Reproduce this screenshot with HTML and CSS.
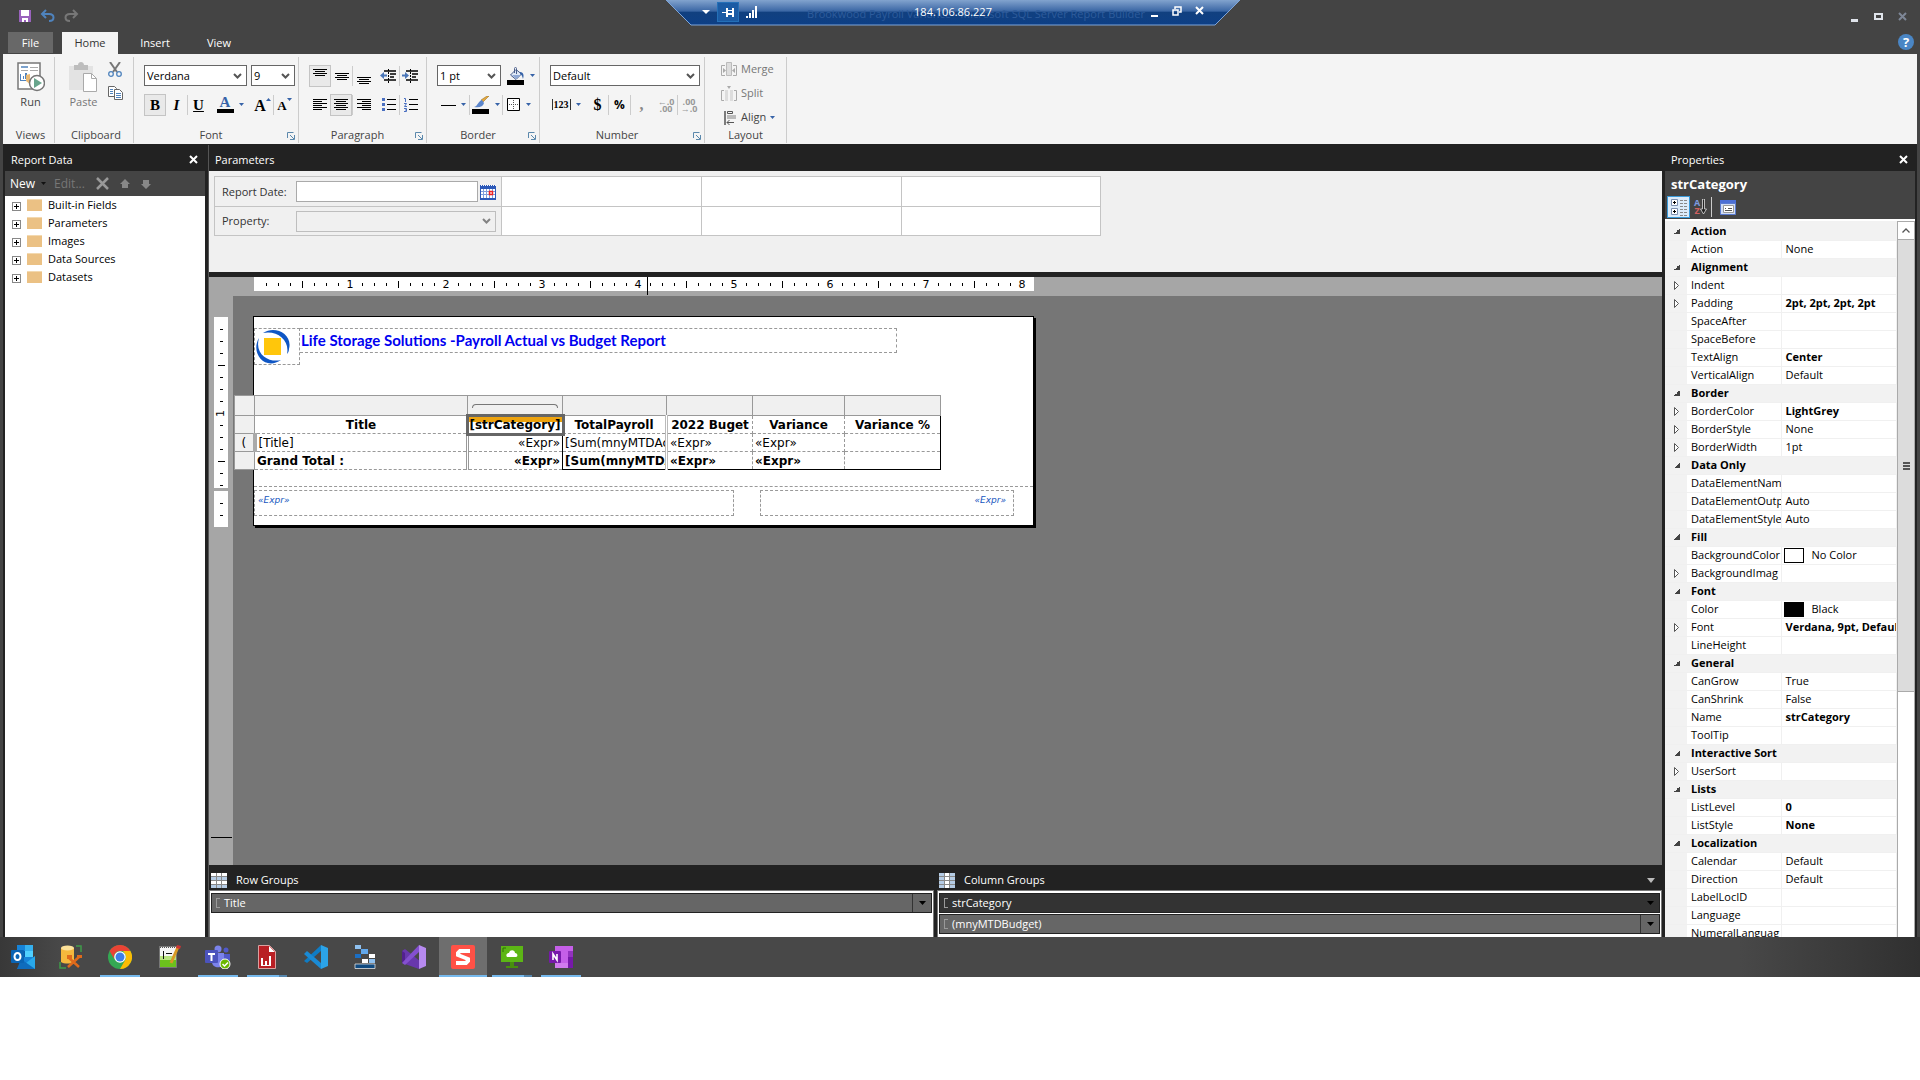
FILE: index.html
```html
<!DOCTYPE html>
<html lang="en">
<head>
  <meta charset="UTF-8">
  <title>Report Builder</title>
  <link rel="stylesheet" href="styles.css">
</head>
<body>
  <div class="window">

    <header class="titlebar">
      <div class="quick">
        <button aria-label="Save"><svg width="12" height="12" viewBox="0 0 12 12"><path fill="#9a63bd" d="M0 0h12v12H0z"/><path fill="#fff" d="M2 0h8v6H2zM3 8h6v4H7v-2H5v2H3z"/></svg></button>
        <button aria-label="Undo"><svg width="15" height="14" viewBox="0 0 15 14"><path fill="none" stroke="#4f83bd" stroke-width="2" d="M6 1L2 5l4 4M2 5h7c6 0 6 7 0 7"/></svg></button>
        <button aria-label="Redo"><svg width="15" height="14" viewBox="0 0 15 14"><path fill="none" stroke="#777" stroke-width="2" d="M9 1l4 4-4 4M13 5H6c-6 0-6 7 0 7"/></svg></button>
      </div>
      <nav class="tabs">
        <button class="tab file">File</button>
        <button class="tab active">Home</button>
        <button class="tab">Insert</button>
        <button class="tab">View</button>
      </nav>
      <div class="win-buttons">
        <button aria-label="Minimize"><svg width="9" height="12"><path fill="#dfe3ea" d="M1 9h7v3H1z"/></svg></button>
        <button aria-label="Maximize"><svg width="9" height="12"><path fill="none" stroke="#dfe3ea" stroke-width="2" d="M1 4h7v5H1z"/></svg></button>
        <button aria-label="Close"><svg width="9" height="12"><path stroke="#7e8797" stroke-width="2" d="M1 3l7 7M8 3l-7 7"/></svg></button>
      </div>
      <button class="help" aria-label="Help">?</button>

      <!-- remote desktop connection bar -->
      <div class="rdp">
        <svg class="rdp-shape" viewBox="0 0 574 26" preserveAspectRatio="none">
          <defs><linearGradient id="rdp" x2="0" y2="1"><stop offset="0" stop-color="#82a3ce"/><stop offset=".45" stop-color="#3a66a4"/><stop offset=".48" stop-color="#11407f"/><stop offset="1" stop-color="#0d3f86"/></linearGradient></defs>
          <path fill="url(#rdp)" stroke="#7da4d8" d="M0 0l25 25h524l25-25"/>
        </svg>
        <span class="ghost">Brookwood Payroll Variance - Microsoft SQL Server Report Builder</span>
        <div class="rdp-row">
          <div class="rdp-left">
            <svg width="8" height="5"><path fill="#fff" d="M0 0h8L4 4z"/></svg>
            <span class="pin"><svg width="12" height="9"><path fill="#fff" d="M0 4h5v1H0zM4 0h2v9H4zM6 2h4v1H6zM6 5h4v2H6zM10 0h2v9h-2z"/></svg></span>
            <svg width="12" height="12"><path fill="#fff" d="M0 10h2v2H0zM3 7h2v5H3zM6 4h2v8H6zM9 0h2v12H9z"/></svg>
          </div>
          <span>184.106.86.227</span>
          <div class="rdp-right">
            <svg width="9" height="12"><path fill="#fff" d="M1 9h7v2H1z"/></svg>
            <svg width="10" height="10"><path fill="none" stroke="#fff" stroke-width="1.5" d="M1 4h5v5H1zM3 3V1h6v5H7"/></svg>
            <svg width="10" height="10"><path stroke="#fff" stroke-width="2" d="M1 1l7 7M8 1L1 8"/></svg>
          </div>
        </div>
      </div>
    </header>

    <section class="ribbon">
      <div class="group g-views">
        <div class="group-body">
          <button class="big"><svg width="28" height="30" viewBox="0 0 28 30"><path fill="#fff" stroke="#777" stroke-width="1.5" d="M1 1h22v26H1z"/><path stroke="#4f83bd" stroke-width="1.5" d="M4 5h7"/><path stroke="#aaa" d="M4 8.500h7M13 5.500h8M13 8.500h8"/><path fill="#4f83bd" d="M3 12h1v6h6v1H3zM6 14h1v3H6zM8 11h2v6H8z"/><path fill="#e9b872" d="M9 13l4-1v10l-4-3z"/><circle cx="20" cy="21" r="7.500" fill="#fff" stroke="#777" stroke-width="1.500"/><path fill="#68a58c" d="M17 16l8 5-8 5z"/></svg>Run</button>
        </div>
        <div class="group-label">Views</div>
      </div>

      <div class="group g-clip">
        <div class="group-body">
          <button class="big dim"><svg width="28" height="30" viewBox="0 0 28 30"><path fill="#e3e3e3" d="M0 4h24v24H0z"/><path fill="#bdbdbd" d="M5 3h4c0-4 6-4 6 0h4v5H5z"/><path fill="#fff" stroke="#aaa" d="M14.500 11.500h8l5 5v13h-13z"/><path fill="none" stroke="#aaa" d="M22.500 11.500v5h5"/></svg>Paste</button>
          <div class="stack">
            <button aria-label="Cut"><svg width="14" height="15" viewBox="0 0 14 15"><path stroke="#777" stroke-width="2" d="M2 0l7 10M12 0L5 10"/><circle cx="3" cy="12" r="2.300" fill="none" stroke="#4f83bd" stroke-width="1.300"/><circle cx="11" cy="12" r="2.300" fill="none" stroke="#4f83bd" stroke-width="1.300"/></svg></button>
            <button aria-label="Copy"><svg width="15" height="14" viewBox="0 0 15 14"><path fill="#fff" stroke="#666" d="M.5.500h6l2 2v8h-8z"/><path fill="#fff" stroke="#666" d="M6.500 3.500h5l3 3v7h-8z"/><path stroke="#4f83bd" d="M2 3.500h3M2 5.500h3M2 7.500h3M8 7.500h5M8 9.500h5M8 11.500h5"/></svg></button>
          </div>
        </div>
        <div class="group-label">Clipboard</div>
      </div>

      <div class="group g-font">
        <div class="rows">
          <div class="row">
            <select class="w-name" aria-label="Font"><option>Verdana</option></select>
            <select class="w-size" aria-label="Font size"><option>9</option></select>
          </div>
          <div class="row">
            <button class="tool on serif"><b>B</b></button>
            <button class="tool serif"><b><i>I</i></b></button>
            <i class="sep"></i>
            <button class="tool serif"><b><u>U</u></b></button>
            <button class="tool drop font-color"><span class="swatch-letter">A</span><svg class="arrow" width="5" height="3"><path d="M0 0h5L2.500 3z"/></svg></button>
            <button class="tool grow">A<svg width="5" height="3"><path fill="#3763a8" d="M0 3h5L2.500 0z"/></svg></button>
            <i class="sep"></i>
            <button class="tool shrink">A<svg width="5" height="3"><path fill="#3763a8" d="M0 0h5L2.500 3z"/></svg></button>
          </div>
        </div>
        <div class="group-label has-launch">Font<svg class="launch" width="8" height="8"><path fill="none" stroke="#5b88ac" d="M.5 6V.5h6M3 3l4 4M7.500 3v4.500H3"/></svg></div>
      </div>

      <div class="group g-para">
        <div class="rows">
          <div class="row">
            <button class="tool on" aria-label="Top"><svg width="14" height="16"><path stroke="#000" d="M0 1.500h14M2 3.500h10M0 5.500h14M2 7.500h10"/></svg></button>
            <button class="tool" aria-label="Middle"><svg width="14" height="16"><path stroke="#000" d="M0 5.500h14M2 7.500h10M0 9.500h14M2 11.500h10"/></svg></button>
            <i class="sep"></i>
            <button class="tool" aria-label="Bottom"><svg width="14" height="16"><path stroke="#000" d="M0 9.500h14M2 11.500h10M0 13.500h14M2 15.500h10"/></svg></button>
            <button class="tool shift" aria-label="Decrease indent"><svg width="17" height="16"><path stroke="#000" stroke-dasharray="2 1" d="M8.500 1v14"/><path stroke="#000" stroke-width="1.500" d="M4 3h12M10 6h6M10 9h4M4 12h12"/><path fill="#4a76b8" d="M0 7.500L4 4v2.500h3v2H4V11z"/></svg></button>
            <i class="sep"></i>
            <button class="tool" aria-label="Increase indent"><svg width="17" height="16"><path stroke="#000" stroke-dasharray="2 1" d="M8.500 1v14"/><path stroke="#000" stroke-width="1.500" d="M4 3h12M10 6h6M10 9h4M4 12h12"/><path fill="#4a76b8" d="M7 7.500L3 4v2.500H0v2h3V11z"/></svg></button>
          </div>
          <div class="row">
            <button class="tool" aria-label="Align left"><svg width="14" height="12"><path stroke="#000" d="M0 .5h14M0 2.500h9M0 4.500h14M0 6.500h9M0 8.500h14M0 10.500h9"/></svg></button>
            <button class="tool on" aria-label="Center"><svg width="14" height="12"><path stroke="#000" d="M0 .5h14M2 2.500h10M0 4.500h14M2 6.500h10M0 8.500h14M2 10.500h10"/></svg></button>
            <i class="sep"></i>
            <button class="tool" aria-label="Align right"><svg width="14" height="12"><path stroke="#000" d="M0 .5h14M5 2.500h9M0 4.500h14M5 6.500h9M0 8.500h14M5 10.500h9"/></svg></button>
            <button class="tool shift" aria-label="Bullets"><svg width="14" height="14"><path fill="#4a6fc0" d="M0 0h3v3H0zM0 5h3v3H0zM0 10h3v3H0z"/><path stroke="#000" d="M5 1.500h9M5 6.500h9M5 11.500h9"/></svg></button>
            <i class="sep"></i>
            <button class="tool" aria-label="Numbering"><svg width="14" height="14"><path fill="none" stroke="#4a6fc0" d="M0 .5h1.500V4M0 5.500h2.500L.5 8.500H3M0 10.500h2.500v3H0M1 12h1"/><path stroke="#000" d="M5 1.500h9M5 6.500h9M5 11.500h9"/></svg></button>
          </div>
        </div>
        <div class="group-label has-launch">Paragraph<svg class="launch" width="8" height="8"><path fill="none" stroke="#5b88ac" d="M.5 6V.5h6M3 3l4 4M7.500 3v4.500H3"/></svg></div>
      </div>

      <div class="group g-border">
        <div class="rows">
          <div class="row">
            <select class="w-pt" aria-label="Border width"><option>1 pt</option></select>
            <button class="tool drop" aria-label="Fill color"><svg width="18" height="18"><path fill="#000" d="M0 13h17v5H0z"/><path fill="#dfe8f6" stroke="#4a5f8c" d="M3.500 8L9 2.500 14.500 7 9 12.500z"/><path fill="#8fa9d6" d="M5 8h9l-5 4z"/><path fill="none" stroke="#4a5f8c" d="M7.500 6V1.500c0-1.500 2-1.500 2 0V7"/><path fill="#3763a8" d="M13 5c4 0 4 4 3 7-1-3-1-4-3-5z"/></svg><svg class="arrow" width="5" height="3"><path d="M0 0h5L2.500 3z"/></svg></button>
          </div>
          <div class="row">
            <button class="tool drop" aria-label="Line style"><svg width="15" height="12"><path stroke="#000" d="M0 6.500h15"/></svg><svg class="arrow" width="5" height="3"><path d="M0 0h5L2.500 3z"/></svg></button>
            <i class="sep"></i>
            <button class="tool drop" aria-label="Border color"><svg width="18" height="18"><path fill="#000" d="M0 13h17v5H0z"/><path fill="#e6a93b" stroke="#8a6420" stroke-width=".5" d="M17 0l-6 6-2-2 6-4z"/><path fill="#5c86cc" d="M10 4l2 3c-1 4-5 5-10 4 4-1 4-6 8-7z"/></svg><svg class="arrow" width="5" height="3"><path d="M0 0h5L2.500 3z"/></svg></button>
            <i class="sep"></i>
            <button class="tool drop" aria-label="Borders"><svg width="14" height="14"><path fill="#fff" stroke="#000" d="M.5.500h12v12H.5z"/><path stroke="#555" stroke-dasharray="1 1" d="M6.500 2v10M2 6.500h10"/></svg><svg class="arrow" width="5" height="3"><path d="M0 0h5L2.500 3z"/></svg></button>
          </div>
        </div>
        <div class="group-label has-launch">Border<svg class="launch" width="8" height="8"><path fill="none" stroke="#5b88ac" d="M.5 6V.5h6M3 3l4 4M7.500 3v4.500H3"/></svg></div>
      </div>

      <div class="group g-num">
        <div class="rows">
          <div class="row">
            <select class="w-fmt" aria-label="Number format"><option>Default</option></select>
          </div>
          <div class="row">
            <button class="tool drop digits"><span>123</span><svg class="arrow" width="5" height="3"><path d="M0 0h5L2.500 3z"/></svg></button>
            <button class="tool money">$</button>
            <i class="sep"></i>
            <button class="tool pct">%</button>
            <i class="sep"></i>
            <button class="tool comma">,</button>
            <button class="tool dec"><span>&larr;.0</span><span>.00</span></button>
            <i class="sep"></i>
            <button class="tool dec"><span>.00</span><span>&rarr;.0</span></button>
          </div>
        </div>
        <div class="group-label has-launch">Number<svg class="launch" width="8" height="8"><path fill="none" stroke="#5b88ac" d="M.5 6V.5h6M3 3l4 4M7.500 3v4.500H3"/></svg></div>
      </div>

      <div class="group g-layout">
        <div class="rows">
          <button class="line dim"><svg width="16" height="15"><path fill="none" stroke="#aaa" d="M4 3.500H.5v10H4M12 3.500h3.500v10H12"/><path fill="#ddd" stroke="#bbb" d="M5.500.500h5v13h-5z"/><path fill="#aaa" d="M2 6l3 2.500L2 11zM14 6l-3 2.500 3 2.500z"/></svg>Merge</button>
          <button class="line dim"><svg width="16" height="15"><path fill="none" stroke="#aaa" d="M3 4.500H.5v10H3M13 4.500h2.500v10H13"/><path fill="#ddd" d="M4 4h3v11H4zM9 4h3v11H9z"/><path fill="#aaa" d="M6 0h4L8 3z"/></svg>Split</button>
          <button class="line"><svg width="16" height="15"><path stroke="#555" stroke-width="1.500" d="M4 1v14"/><path fill="none" stroke="#555" d="M6.500 1.500h5v2h-5z"/><path fill="#bbb" d="M6 5h9v4H6z"/><path fill="none" stroke="#555" d="M13 12.500H6M8.500 10L6 12.500 8.500 15"/></svg>Align<svg class="arrow" width="5" height="3"><path d="M0 0h5L2.500 3z"/></svg></button>
        </div>
        <div class="group-label">Layout</div>
      </div>
    </section>

    <main class="workspace">

      <aside class="report-data">
        <div class="pane-title">Report Data<button aria-label="Close"><svg width="9" height="9"><path stroke="#fff" stroke-width="2" d="M1 1l7 7M8 1L1 8"/></svg></button></div>
        <div class="data-tools">
          <button>New</button><svg width="5" height="3"><path fill="#111" d="M0 0h5L2.500 3z"/></svg>
          <button class="off">Edit...</button>
          <button aria-label="Delete"><svg width="13" height="13"><path stroke="#999" stroke-width="2.500" d="M1 1l11 11M12 1L1 12"/></svg></button>
          <button aria-label="Move up"><svg width="10" height="10"><path fill="#888" d="M5 0l5 5H8v4H2V5H0z"/></svg></button>
          <button aria-label="Move down"><svg width="10" height="10"><path fill="#888" d="M5 10L0 5h2V1h6v4h2z"/></svg></button>
        </div>
        <ul class="tree">
          <li><span class="plus"></span><span class="folder"></span>Built-in Fields</li>
          <li><span class="plus"></span><span class="folder"></span>Parameters</li>
          <li><span class="plus"></span><span class="folder"></span>Images</li>
          <li><span class="plus"></span><span class="folder"></span>Data Sources</li>
          <li><span class="plus"></span><span class="folder"></span>Datasets</li>
        </ul>
      </aside>

      <section class="center">
        <div class="pane-title">Parameters</div>
        <div class="params">
          <div class="param-grid">
            <div class="param">
              <label for="report-date">Report Date:</label>
              <input type="text" id="report-date">
              <svg width="16" height="16"><path fill="#2b58b8" d="M0 1h16v15H0z"/><path fill="#fff" d="M1 5h14v9H1z"/><path stroke="#7f9fdc" d="M3.500 5v9M6.500 5v9M9.500 5v9M12.500 5v9M1 7.500h14M1 10.500h14"/><path fill="none" stroke="#fff" stroke-dasharray="1 1" d="M1 1.500h15"/><path fill="#fff" stroke="#e22" stroke-width="1.500" d="M9.500 7.500h3v3h-3z"/></svg>
            </div>
            <div></div><div></div><div></div>
            <div class="param">
              <label for="property">Property:</label>
              <select id="property" disabled></select>
            </div>
            <div></div><div></div><div></div>
          </div>
        </div>

        <div class="design">
          <div class="ruler-x">
            <div class="ticks-x"><span>1</span><span>2</span><span>3</span><span>4</span><span>5</span><span>6</span><span>7</span><span>8</span></div>
            <i class="cursor-x"></i>
          </div>
          <div class="ruler-y">
            <div class="ticks-y"><span>1</span></div>
            <div class="ticks-y footer-ticks"></div>
            <i class="cursor-y"></i>
          </div>
          <div class="canvas">
            <div class="page">
              <div class="page-head">
                <div class="logo"><svg width="36" height="36" viewBox="0 0 36 36"><path fill="#ffc60b" d="M9 9h17v17H9z"/><path fill="#0f56c4" d="M8 4C20-4 38 5 34 20c0 2-1 4-2 5C35 11 22 1 8 4z"/><path fill="#0f56c4" d="M4 9C-5 24 10 42 26 31 15 34-1 26 4 9z"/></svg></div>
                <div class="report-title">Life Storage Solutions -Payroll Actual vs Budget Report</div>
              </div>
              <table class="tablix">
                <colgroup><col class="c-handle"><col class="c-title"><col class="c-cat"><col class="c-total"><col class="c-budget"><col class="c-var"><col class="c-pct"></colgroup>
                <thead>
                  <tr class="handles"><td></td><td></td><td><i class="bracket"></i></td><td></td><td></td><td></td><td></td></tr>
                  <tr><td class="handle"></td><th>Title</th><th class="selected">[strCategory]</th><th class="edge-l">TotalPayroll</th><th class="split">2022 Buget</th><th>Variance</th><th class="edge-r">Variance %</th></tr>
                </thead>
                <tbody>
                  <tr><td class="handle">(</td><td class="first">[Title]</td><td class="num">«Expr»</td><td class="edge-l">[Sum(mnyMTDAc</td><td class="split">«Expr»</td><td>«Expr»</td><td class="edge-r"></td></tr>
                  <tr class="total"><td class="handle"></td><td>Grand Total :</td><td class="num">«Expr»</td><td class="edge-l">[Sum(mnyMTDA</td><td class="split">«Expr»</td><td>«Expr»</td><td class="edge-r"></td></tr>
                </tbody>
              </table>
              <div class="page-foot">
                <div class="foot-left">«Expr»</div>
                <div class="foot-right">«Expr»</div>
              </div>
            </div>
          </div>
        </div>

        <div class="groups">
          <div class="grp">
            <div class="grp-title"><svg width="16" height="15"><path fill="#fff" d="M0 0h16v15H0z"/><path fill="#b4cbe4" d="M0 4h16v4H0zM0 11h16v4H0z"/><path fill="none" stroke="#888" d="M0 3.500h16M0 7.500h16M0 11.500h16M5.500 0v15M10.500 0v15"/></svg>Row Groups</div>
            <div class="grp-list">
              <button class="grp-item"><em></em>Title<span><svg width="7" height="4"><path d="M0 0h7L3.500 4z"/></svg></span></button>
            </div>
          </div>
          <div class="grp">
            <div class="grp-title"><svg width="16" height="15"><path fill="#b4cbe4" d="M0 0h16v15H0z"/><path fill="#fff" d="M5 0h6v15H5z"/><path fill="none" stroke="#888" d="M0 3.500h16M0 7.500h16M0 11.500h16M5.500 0v15M10.500 0v15"/></svg>Column Groups<svg class="more" width="8" height="5"><path fill="#bbb" d="M0 0h8L4 5z"/></svg></div>
            <div class="grp-list">
              <button class="grp-item dark"><em></em>strCategory<span><svg width="7" height="4"><path d="M0 0h7L3.500 4z"/></svg></span></button>
              <button class="grp-item"><em></em>(mnyMTDBudget)<span><svg width="7" height="4"><path d="M0 0h7L3.500 4z"/></svg></span></button>
            </div>
          </div>
        </div>
      </section>

      <aside class="properties">
        <div class="pane-title">Properties<button aria-label="Close"><svg width="9" height="9"><path stroke="#fff" stroke-width="2" d="M1 1l7 7M8 1L1 8"/></svg></button></div>
        <div class="prop-head">
          <div class="prop-name">strCategory</div>
          <div class="prop-tools">
            <button class="on" aria-label="Categorized"><svg width="18" height="18"><path fill="#fff" stroke="#7b8fb0" d="M1.500 1.500h6v6h-6zM1.500 10.500h6v6h-6z"/><path stroke="#000" d="M3 4.500h3M4.500 3v3M3 13.500h3M4.500 12v3"/><path stroke="#888" stroke-dasharray="3 1" d="M10 2.500h7M10 5.500h7M10 8.500h7M10 11.500h7M10 14.500h7M10 17.500h7"/></svg></button>
            <button aria-label="Alphabetical" class="az"><span><b>A</b><b>Z</b></span><svg width="7" height="16"><path fill="#222" stroke="#ddd" stroke-width=".8" d="M2.500 0h2v10h2l-3 5-3-5h2z"/></svg></button>
            <i class="sep"></i>
            <button aria-label="Property pages"><svg width="16" height="15"><path fill="#4b6fd6" d="M0 0h16v4H0z"/><path fill="#cfdcf5" stroke="#5a7bd0" d="M.5 3.500h15v11H.5z"/><path fill="#fff" stroke="#999" d="M3.500 5.500h10v7h-10z"/><path stroke="#555" d="M5 8.500h1M8 8.500h4M5 10.500h7"/></svg></button>
          </div>
        </div>
        <div class="prop-body">
          <table class="props">
            <colgroup><col class="p-mark"><col class="p-key"><col></colgroup>
            <tbody>
              <tr class="cat"><td></td><th colspan="2">Action</th></tr>
              <tr><td></td><td>Action</td><td>None</td></tr>
              <tr class="cat"><td></td><th colspan="2">Alignment</th></tr>
              <tr class="sub"><td></td><td>Indent</td><td></td></tr>
              <tr class="sub"><td></td><td>Padding</td><td><b>2pt, 2pt, 2pt, 2pt</b></td></tr>
              <tr><td></td><td>SpaceAfter</td><td></td></tr>
              <tr><td></td><td>SpaceBefore</td><td></td></tr>
              <tr><td></td><td>TextAlign</td><td><b>Center</b></td></tr>
              <tr><td></td><td>VerticalAlign</td><td>Default</td></tr>
              <tr class="cat"><td></td><th colspan="2">Border</th></tr>
              <tr class="sub"><td></td><td>BorderColor</td><td><b>LightGrey</b></td></tr>
              <tr class="sub"><td></td><td>BorderStyle</td><td>None</td></tr>
              <tr class="sub"><td></td><td>BorderWidth</td><td>1pt</td></tr>
              <tr class="cat"><td></td><th colspan="2">Data Only</th></tr>
              <tr><td></td><td>DataElementNam</td><td></td></tr>
              <tr><td></td><td>DataElementOutp</td><td>Auto</td></tr>
              <tr><td></td><td>DataElementStyle</td><td>Auto</td></tr>
              <tr class="cat"><td></td><th colspan="2">Fill</th></tr>
              <tr><td></td><td>BackgroundColor</td><td class="color"><i class="chip"></i>No Color</td></tr>
              <tr class="sub"><td></td><td>BackgroundImag</td><td></td></tr>
              <tr class="cat"><td></td><th colspan="2">Font</th></tr>
              <tr><td></td><td>Color</td><td class="color"><i class="chip black"></i>Black</td></tr>
              <tr class="sub"><td></td><td>Font</td><td><b>Verdana, 9pt, Default,</b></td></tr>
              <tr><td></td><td>LineHeight</td><td></td></tr>
              <tr class="cat"><td></td><th colspan="2">General</th></tr>
              <tr><td></td><td>CanGrow</td><td>True</td></tr>
              <tr><td></td><td>CanShrink</td><td>False</td></tr>
              <tr><td></td><td>Name</td><td><b>strCategory</b></td></tr>
              <tr><td></td><td>ToolTip</td><td></td></tr>
              <tr class="cat"><td></td><th colspan="2">Interactive Sort</th></tr>
              <tr class="sub"><td></td><td>UserSort</td><td></td></tr>
              <tr class="cat"><td></td><th colspan="2">Lists</th></tr>
              <tr><td></td><td>ListLevel</td><td><b>0</b></td></tr>
              <tr><td></td><td>ListStyle</td><td><b>None</b></td></tr>
              <tr class="cat"><td></td><th colspan="2">Localization</th></tr>
              <tr><td></td><td>Calendar</td><td>Default</td></tr>
              <tr><td></td><td>Direction</td><td>Default</td></tr>
              <tr><td></td><td>LabelLocID</td><td></td></tr>
              <tr><td></td><td>Language</td><td></td></tr>
              <tr><td></td><td>NumeralLanguag</td><td></td></tr>
            </tbody>
          </table>
          <div class="scroll">
            <span class="up"><svg width="8" height="5"><path fill="none" stroke="#555" stroke-width="1.300" d="M.5 4.500L4 1l3.500 3.500"/></svg></span>
            <span class="thumb"><svg width="7" height="8"><path stroke="#555" stroke-width="2" d="M0 1h7M0 4h7M0 7h7"/></svg></span>
            <span class="down"></span>
          </div>
        </div>
      </aside>
    </main>

    <footer class="taskbar">
      <button aria-label="Outlook"><svg width="24" height="24"><path fill="#1683d8" d="M6 0h16v18H6z"/><path fill="#35b0ee" d="M14 0h8v6h-8z"/><path fill="#0a5aa8" d="M6 6h8v6H6z"/><path fill="#50d0ff" d="M14 6h8v6h-8z"/><path fill="#28a8ea" d="M6 24h18V11l-9 7z"/><path fill="#0f6cbd" d="M6 24h18L10 14z"/><rect y="5" width="13" height="13" rx="1" fill="#0a64b4"/><ellipse cx="6.500" cy="11.500" rx="3" ry="3.500" fill="none" stroke="#fff" stroke-width="2"/></svg></button>
      <button aria-label="SQL Server Management Studio"><svg width="24" height="24"><path fill="#f5b83d" d="M2 3h13v14c-3 2-10 2-13 0z"/><ellipse cx="8.500" cy="3" rx="6.500" ry="2.500" fill="#fde29a"/><path fill="none" stroke="#3f9a4a" stroke-width="1.500" d="M17 1h5v6M1 17v6h6"/><path stroke="#e06a1b" stroke-width="2.500" d="M9 12l11 10M20 12L9 22"/><path fill="#e06a1b" d="M8 10h5v4H8zM18 10h5v3h-5z"/></svg></button>
      <button class="run" aria-label="Chrome"><svg width="24" height="24" viewBox="0 0 24 24"><circle cx="12" cy="12" r="12" fill="#34a853"/><path fill="#ea4335" d="M1.600 6A12 12 0 0 1 22.400 6H12a6 6 0 0 0-5.200 9z"/><path fill="#fbbc05" d="M22.400 6A12 12 0 0 1 12 24l5.200-9A6 6 0 0 0 17 9l-2-3z"/><circle cx="12" cy="12" r="5.800" fill="#fff"/><circle cx="12" cy="12" r="4.500" fill="#3f7ee8"/></svg></button>
      <button aria-label="Notepad++"><svg width="24" height="24"><path fill="#f5f5f5" stroke="#777" d="M2.500 1.500h17v21h-17z"/><path fill="#6bc21c" d="M3 13h16v9H3z"/><path fill="#b7e37e" d="M3 11h16v4H3z"/><path stroke="#555" stroke-dasharray="1 1" d="M3 2.500h16"/><path stroke="#111" d="M6.500 6v8M9 8.500h6"/><path stroke="#d99a26" stroke-width="3" d="M21 2l-7 16"/><path fill="#c33" d="M20 0l4 1-1 3-4-1z"/></svg></button>
      <button class="run" aria-label="Teams"><svg width="26" height="24"><circle cx="13" cy="4" r="3.500" fill="#7b83eb"/><circle cx="21" cy="5" r="2.500" fill="#5059c9"/><path fill="#5059c9" d="M16 9h9v7c0 4-6 5-8 2z"/><path fill="#7b83eb" d="M7 8h12v9c0 7-12 7-12 0z"/><rect y="5" width="13" height="13" rx="1" fill="#4b53bc"/><path fill="#fff" d="M3 8h7v2H7.500v6h-2v-6H3z"/><circle cx="20" cy="19" r="5" fill="#6bb700" stroke="#fff"/><path fill="none" stroke="#fff" stroke-width="1.500" d="M17.500 19l2 2 3.500-3.500"/></svg></button>
      <button class="run multi" aria-label="Report Builder"><svg width="20" height="24"><path fill="#b81f24" stroke="#d8a0a0" d="M1.500.500h11l6 6v17h-17z"/><path fill="#fff" d="M12 1v6h6zM4 13h2v7H4zM8 16h2v4H8zM12 11h2v9h-2zM4 20h10v1H4z"/></svg></button>
      <button aria-label="Visual Studio Code"><svg width="24" height="24" viewBox="0 0 24 24"><path fill="#0f7cc4" d="M17 0v6L3 18l-3-2 15-14z"/><path fill="#1a8ad4" d="M3 6l14 12v6L0 9z"/><path fill="#2ba3e8" d="M17 0l7 3v18l-7 3z"/></svg></button>
      <button aria-label="Integration Services"><svg width="22" height="24"><path fill="#8fc1f0" d="M1 0h6v4H1z"/><path fill="#62a8ec" d="M7 4h7v5H7z"/><path fill="#1b6fc4" d="M1 9h6v4H1z"/><path fill="#fff" d="M15 9h6v4h-6zM8 14h6v4H8z"/><path fill="#8fc1f0" d="M15 14h6v4h-6z"/><path fill="#104a80" stroke="#e0e0e0" stroke-width=".8" d="M1 19h20v4.500H1z"/></svg></button>
      <button aria-label="Visual Studio"><svg width="24" height="24" viewBox="0 0 24 24"><path fill="#6b35b8" d="M0 6l3-2 16 13-2 7L3 19z" opacity=".9"/><path fill="#52218f" d="M0 6l3 2v8l-3 2z"/><path fill="#8450cf" d="M17 0v7L3 20l-3-2z"/><path fill="#b78af0" d="M17 0l7 3v18l-7 3z"/></svg></button>
      <button class="run current" aria-label="Snagit"><svg width="24" height="24"><rect width="24" height="24" rx="2" fill="#ff5146"/><path fill="none" stroke="#fff" stroke-width="4" d="M19 6H9L7 8v2l10 4v2l-2 2H5"/></svg></button>
      <button class="run multi" aria-label="Remote Desktop"><svg width="24" height="24"><path fill="#5cb615" d="M1 1h22v16H1z"/><path fill="#478f0e" d="M10 17h4v4h-4zM6 21h12v2H6z"/><path fill="#fff" d="M7 12c-2-3 1-4 2-4 1-4 6-3 6 0 3 0 3 4 1 4z"/><path fill="none" stroke="#2f6e06" d="M3 7V3h3"/></svg></button>
      <button class="run" aria-label="OneNote"><svg width="24" height="24"><path fill="#c55fe8" d="M6 1h18v22H6z"/><path fill="#9332bf" d="M19 6h5v6h-5z"/><path fill="#7719aa" d="M19 12h5v11h-5z"/><path fill="#e6a5fa" d="M6 18h13v5H6z" opacity=".4"/><rect y="6" width="12" height="12" rx="1" fill="#7719aa"/><path fill="none" stroke="#fff" stroke-width="1.600" d="M4 15V9l4 6V9"/></svg></button>
    </footer>
  </div>
</body>
</html>
```

FILE: styles.css
```css
* {
  box-sizing: border-box;
}
body {
  margin: 0;
  background: #fff;
  font-family: "Open Sans", "Noto Sans", sans-serif;
  font-size: 11px;
  line-height: 16px;
  color: #000;
}
button {
  padding: 0;
  border: none;
  background: none;
  font: inherit;
  color: inherit;
  display: flex;
  align-items: center;
  justify-content: center;
}
svg {
  display: block;
  flex: none;
}
.window {
  display: flex;
  flex-direction: column;
  height: calc(100vh - 103px);
  background: #444;
}

/* title bar */
.titlebar {
  position: relative;
  display: grid;
  grid-template-columns: 1fr auto;
  grid-template-rows: 32px 22px;
  color: #fff;
}
.quick {
  display: flex;
  align-items: center;
  gap: 9px;
  padding-left: 19px;
}
.win-buttons {
  display: flex;
  align-items: center;
  gap: 15px;
  padding-right: 13px;
}
.tabs {
  grid-row: 2;
  display: flex;
  padding-left: 8px;
}
.tab {
  width: 64px;
}
.tab.file {
  width: 45px;
  height: 21px;
  margin-right: 9px;
  background: #686868;
}
.tab.active {
  width: 56px;
  margin-right: 5px;
  background: #f4f4f4;
  color: #333;
}
.help {
  grid-row: 2;
  justify-self: end;
  width: 16px;
  height: 16px;
  margin: 2px 6px 0 0;
  border-radius: 50%;
  background: #4a86c5;
  font-weight: bold;
  font-size: 13px;
}
.rdp {
  position: absolute;
  top: 0;
  left: 50%;
  width: 574px;
  height: 26px;
  margin-left: -294px;
}
.rdp-shape {
  position: absolute;
  width: 100%;
  height: 100%;
}
.ghost {
  position: absolute;
  left: 46px;
  right: 0;
  top: 6px;
  text-align: center;
  color: #2e5c9c;
}
.rdp-row {
  position: relative;
  display: grid;
  grid-template-columns: 1fr auto 1fr;
  align-items: center;
  height: 24px;
}
.rdp-left {
  display: flex;
  align-items: center;
  gap: 7px;
  padding-left: 36px;
}
.rdp-right {
  display: flex;
  justify-content: flex-end;
  gap: 13px;
  padding-right: 35px;
}
.pin {
  display: flex;
  align-items: center;
  justify-content: center;
  width: 22px;
  height: 20px;
  border: 1px solid #2470b8;
  background: #1b5ba4;
}

/* ribbon */
.ribbon {
  display: flex;
  height: 90px;
  margin: 0 3px;
  background: #f4f4f4;
  color: #444;
}
.group {
  display: flex;
  flex-direction: column;
  margin: 3px 0 1px;
  border-right: 1px solid #ccc;
}
.g-views {
  width: 52px;
  padding-left: 4px;
}
.g-clip {
  width: 79px;
  padding-left: 4px;
}
.g-font { width: 165px; }
.g-para { width: 128px; }
.g-border { width: 113px; }
.g-num { width: 165px; }
.g-layout { width: 82px; }
.group-body {
  display: flex;
  flex: 1;
  justify-content: center;
  gap: 10px;
  padding-top: 5px;
}
.big {
  flex-direction: column;
  justify-content: flex-start;
  gap: 2px;
}
.dim {
  color: #777;
}
.stack {
  display: flex;
  flex-direction: column;
  gap: 9px;
}
.rows {
  display: flex;
  flex-direction: column;
  gap: 8px;
  flex: 1;
  padding: 8px 0 0 10px;
}
.row {
  display: flex;
  align-items: center;
  height: 21px;
  gap: 4px;
}
.row + .row,
.g-para .row {
  gap: 0;
}
.group-label {
  position: relative;
  height: 16px;
  text-align: center;
}
.has-launch {
  padding-right: 10px;
}
.launch {
  position: absolute;
  right: 3px;
  top: 5px;
}
select {
  appearance: none;
  height: 21px;
  padding: 0 2px;
  border: 1px solid #666;
  border-radius: 0;
  background: #fff url("data:image/svg+xml,%3Csvg xmlns='http://www.w3.org/2000/svg' width='9' height='6'%3E%3Cpath fill='none' stroke='%23555' stroke-width='2' d='M1 1l3.500 3.500L8 1'/%3E%3C/svg%3E") no-repeat right 4px center;
  font: inherit;
  color: #000;
}
.w-name { width: 103px; }
.w-size { width: 44px; }
.w-pt { width: 64px; }
.w-fmt { width: 150px; }
.tool {
  width: 21px;
  height: 22px;
  color: #000;
}
.tool.on {
  width: 22px;
  border: 1px solid #c4c4c4;
  background: #e9e9e9;
}
.tool.shift {
  margin-left: 4px;
}
.tool.drop {
  width: 32px;
  gap: 5px;
}
.serif {
  font-family: "Liberation Serif", serif;
  font-size: 15px;
}
.sep {
  width: 1px;
  height: 20px;
  background: #ccc;
}
.arrow {
  fill: #3763a8;
}
.font-color {
  margin: 0 6px 0 5px;
}
.swatch-letter {
  width: 17px;
  height: 17px;
  border-bottom: 4px solid #000;
  font: bold 15px/13px "Liberation Serif", serif;
  color: #3763a8;
}
.grow, .shrink {
  align-items: flex-start;
  font: bold 16px/24px "Liberation Serif", serif;
}
.grow svg, .shrink svg {
  margin-top: 4px;
}
.shrink {
  font-size: 13px;
}
.digits span {
  padding: 0 1px;
  border: solid #333;
  border-width: 0 1px;
  font: bold 10px/11px "Liberation Serif", serif;
}
.money {
  margin-left: 5px;
  font: bold 16px "Liberation Serif", serif;
}
.pct {
  font: bold 12px "Open Sans", sans-serif;
}
.comma {
  margin-right: 3px;
  color: #888;
  font: bold 16px "Liberation Serif", serif;
}
.dec {
  flex-direction: column;
  width: 22px;
  color: #999;
  font-size: 9px;
  font-weight: bold;
  line-height: 7px;
}
.g-layout .rows {
  gap: 8px;
  padding: 4px 0 0 16px;
}
.line {
  justify-content: flex-start;
  gap: 4px;
  height: 16px;
}

/* workspace */
.workspace {
  display: grid;
  grid-template-columns: 206px minmax(0, 1fr) 255px;
  flex: 1;
  min-height: 0;
  margin: 0 3px;
  padding-top: 1px;
  background: #222;
}
.pane-title {
  display: flex;
  align-items: center;
  justify-content: space-between;
  height: 26px;
  padding: 3px 7px 0 6px;
  color: #fff;
}
.report-data {
  display: flex;
  flex-direction: column;
  padding: 0 3px 0 2px;
  border-right: 1px solid #555;
}
.data-tools {
  display: flex;
  align-items: center;
  gap: 11px;
  height: 25px;
  padding-left: 5px;
  background: #444;
  color: #fff;
  font-size: 12px;
}
.data-tools > svg {
  margin: 0 -3px 0 -5px;
}
.data-tools .off {
  color: #777;
}
.tree {
  flex: 1;
  margin: 0;
  padding: 0 0 0 7px;
  background: #fff;
  list-style: none;
}
.tree li {
  display: flex;
  align-items: center;
  height: 18px;
}
.plus {
  width: 9px;
  height: 9px;
  margin-top: 3px;
  border: 1px solid #888;
  background: linear-gradient(#000, #000) center/5px 1px no-repeat, linear-gradient(#000, #000) center/1px 5px no-repeat;
}
.folder {
  width: 15px;
  height: 12px;
  margin: 0 6px;
  background: #ebc184;
  border-top: 1px solid #f3d9b0;
}
.center {
  display: flex;
  flex-direction: column;
  min-width: 0;
  min-height: 0;
}
.params {
  height: 101px;
  padding: 5px;
  background: #f0f0f0;
}
.param-grid {
  display: grid;
  grid-template-columns: 286px 199px 199px 198px;
  grid-template-rows: 29px 28px;
  gap: 1px;
  width: max-content;
  padding: 1px;
  background: #c4c4c4;
}
.param-grid > div {
  background: #fff;
}
.param-grid > .param {
  display: flex;
  align-items: center;
  gap: 2px;
  padding: 0 5px 0 7px;
  background: #f0f0f0;
  color: #333;
}
.param label {
  width: 72px;
}
.param input,
.param select {
  flex: 1;
  min-width: 0;
  height: 21px;
  border: 1px solid #aaa;
  background-color: #fff;
}
.param select {
  background-color: #f0f0f0;
  opacity: .7;
}

/* design surface */
.design {
  display: grid;
  grid-template-columns: 24px minmax(0, 1fr);
  grid-template-rows: 19px minmax(0, 1fr);
  flex: 1;
  min-height: 0;
  margin-top: 5px;
  background: #a6a6a6;
}
.ruler-x {
  position: relative;
  grid-column: 1 / 3;
  padding-left: 45px;
}
.ticks-x {
  display: flex;
  width: 780px;
  height: 14px;
  padding-left: 48px;
  background:
    repeating-linear-gradient(90deg, transparent 0 48px, #000 48px 49px, transparent 49px 96px) 0 4px/100% 7px no-repeat,
    repeating-linear-gradient(90deg, transparent 0 12px, #000 12px 13px, transparent 13px 24px, #000 24px 25px, transparent 25px 36px, #000 36px 37px, transparent 37px 48px) 0 6px/100% 3px no-repeat,
    #fff;
}
.ticks-x span {
  width: 96px;
  flex: none;
  text-align: center;
  font: 11px/15px "DejaVu Sans", sans-serif;
  background: linear-gradient(#fff, #fff) center/10px 100% no-repeat;
}
.cursor-x {
  position: absolute;
  left: 438px;
  top: 0;
  width: 1px;
  height: 18px;
  background: #000;
}
.ruler-y {
  display: flex;
  flex-direction: column;
  align-items: center;
  padding-top: 21px;
}
.ticks-y {
  display: flex;
  align-items: flex-start;
  justify-content: center;
  width: 14px;
  height: 171px;
  padding-top: 90px;
  background:
    repeating-linear-gradient(transparent 0 48px, #000 48px 49px, transparent 49px 96px) 4px 0/7px 100% no-repeat,
    repeating-linear-gradient(transparent 0 12px, #000 12px 13px, transparent 13px 24px, #000 24px 25px, transparent 25px 36px, #000 36px 37px, transparent 37px 48px) 6px 0/3px 100% no-repeat,
    #fff;
}
.ticks-y span {
  width: 14px;
  height: 12px;
  background: #fff;
  writing-mode: sideways-lr;
  text-align: center;
  font: 11px/14px "DejaVu Sans", sans-serif;
}
.footer-ticks {
  height: 36px;
  margin-top: 3px;
  padding: 0;
}
.cursor-y {
  width: 21px;
  height: 1px;
  margin-top: 310px;
  background: #000;
}
.canvas {
  padding: 20px 0 0 20px;
  background: #767676;
}
.page {
  width: 781px;
  height: 210px;
  padding-top: 11px;
  border: 1px solid #000;
  background: #fff;
  box-shadow: 2px 2px #000;
}
.page-head {
  display: flex;
  align-items: flex-start;
  height: 67px;
}
.logo {
  width: 46px;
  height: 37px;
  border: 1px dashed #999;
}
.report-title {
  width: 597px;
  height: 25px;
  padding: 1px;
  border: 1px dashed #999;
  border-left: none;
  font: bold 15px/21px Lato, sans-serif;
  color: #0000f0;
}
.tablix {
  width: 707px;
  margin-left: -20px;
  table-layout: fixed;
  border-collapse: collapse;
  font-family: "DejaVu Sans", sans-serif;
  font-size: 12px;
}
.c-handle { width: 20px; }
.c-title { width: 213px; }
.c-cat { width: 95px; }
.c-total { width: 104px; }
.c-budget { width: 86px; }
.c-var { width: 92px; }
.tablix td,
.tablix th {
  height: 18px;
  padding: 1px 2px 0;
  border: 1px dashed #999;
  overflow: hidden;
  white-space: nowrap;
  line-height: 16px;
}
.tablix .handles td {
  height: 20px;
  border: 1px solid #999;
  background: #f0f0f0;
}
.tablix td.handle {
  border: 1px solid #999;
  background: #f0f0f0;
  text-align: center;
}
.tablix .first {
  border-left: 4px solid #aaa;
}
.tablix .num {
  text-align: right;
  border-left: 3px double #999;
}
.tablix .edge-l {
  border-left: 1px solid #000;
}
.tablix .split {
  border-left: 3px double #bbb;
}
.tablix .edge-r {
  border-right: 1px solid #000;
}
.tablix th.edge-l,
.tablix th.edge-l ~ th {
  border-top: 1px solid #000;
}
.tablix .total {
  font-weight: bold;
}
.tablix .total .edge-l,
.tablix .total .edge-l ~ td {
  border-bottom: 1px solid #000;
}
.tablix .selected {
  padding: 1px 0 0;
  outline: 3px solid #666;
  outline-offset: -1px;
  background: linear-gradient(#eda30f, #eda30f) top/100% 6px no-repeat;
}
.bracket {
  display: block;
  height: 4px;
  margin: 0 2px;
  border: 1px solid #777;
  border-bottom: none;
  border-radius: 4px 4px 0 0;
}
.page-foot {
  display: flex;
  gap: 26px;
  margin-top: 16px;
  padding-top: 3px;
  border-top: 1px dashed #999;
  font: italic 9px/12px "DejaVu Sans", sans-serif;
  color: #1857c0;
}
.foot-left,
.foot-right {
  height: 26px;
  padding: 3px;
  border: 1px dashed #999;
}
.foot-left {
  width: 480px;
}
.foot-right {
  width: 254px;
  padding-right: 7px;
  text-align: right;
}

/* grouping pane */
.groups {
  display: grid;
  grid-template-columns: 1fr 1fr;
  gap: 3px;
  height: 72px;
}
.grp-title {
  display: flex;
  align-items: center;
  gap: 9px;
  height: 25px;
  padding: 5px 7px 0 2px;
  color: #fff;
}
.more {
  margin-left: auto;
}
.grp-list {
  display: flex;
  flex-direction: column;
  gap: 1px;
  height: 47px;
  padding: 2px 1px;
  border: 1px solid #777;
  border-bottom: none;
  background: #fff;
}
.grp-item {
  height: 20px;
  justify-content: flex-start;
  gap: 4px;
  padding-left: 4px;
  border: 1px solid #222;
  background: #666;
  color: #fff;
}
.grp-item em {
  width: 4px;
  height: 10px;
  border: 1px solid #999;
  border-right: none;
}
.grp-item span {
  display: flex;
  align-items: center;
  justify-content: center;
  width: 19px;
  height: 18px;
  margin-left: auto;
  border-left: 1px solid #333;
}
.grp-item.dark {
  background: #333;
}

/* properties */
.properties {
  display: flex;
  flex-direction: column;
  min-height: 0;
  padding-right: 2px;
  border-left: 3px solid #222;
}
.prop-head {
  height: 50px;
  padding: 5px 2px 0;
  border-bottom: 2px solid #fff;
  background: #444;
  color: #fff;
}
.prop-name {
  padding-left: 4px;
  font-size: 13px;
  font-weight: bold;
}
.prop-tools {
  display: flex;
  align-items: center;
  gap: 4px;
  margin-top: 4px;
}
.prop-tools .on {
  width: 23px;
  height: 22px;
  border: 1px solid #3a9ad9;
  background: #dcebfa;
}
.prop-tools .sep {
  margin-right: 4px;
}
.az span {
  display: flex;
  flex-direction: column;
  font-size: 9px;
  line-height: 8px;
  color: #7f9be0;
}
.az b + b {
  color: #d06060;
}
.prop-body {
  display: grid;
  grid-template-columns: minmax(0, 1fr) 18px;
  flex: 1;
  min-height: 0;
  overflow: hidden;
  background: #f2f2f2;
}
.props {
  width: 100%;
  height: max-content;
  margin-top: 1px;
  table-layout: fixed;
  border-collapse: collapse;
}
.p-mark { width: 22px; }
.p-key { width: 94px; }
.props td,
.props th {
  height: 18px;
  padding: 0 0 0 4px;
  border-bottom: 1px solid #f0f0f0;
  overflow: hidden;
  white-space: nowrap;
  text-align: left;
  background: #fff;
}
.props td + td {
  border-right: 1px solid #f0f0f0;
}
.props td:first-child,
.props .cat th {
  background: #f2f2f2;
}
.cat td:first-child::before {
  content: "";
  display: block;
  width: 6px;
  height: 6px;
  margin-left: 5px;
  background: linear-gradient(135deg, transparent 50%, #444 50%);
}
.sub td:first-child::before {
  content: "";
  display: block;
  width: 6px;
  height: 9px;
  margin-left: 5px;
  background: url("data:image/svg+xml,%3Csvg xmlns='http://www.w3.org/2000/svg' width='6' height='9'%3E%3Cpath fill='%23fff' stroke='%23555' d='M.5.500v8l4-4z'/%3E%3C/svg%3E") no-repeat;
}
.props td.color {
  padding-left: 2px;
}
.chip {
  display: inline-block;
  width: 20px;
  height: 15px;
  margin-right: 8px;
  border: 1px solid #000;
  vertical-align: middle;
}
.chip.black {
  background: #000;
}
.scroll {
  display: flex;
  flex-direction: column;
  min-height: 0;
  height: 100%;
  border: 1px solid #aaa;
  background: #fff;
}
.scroll span {
  display: flex;
  align-items: center;
  justify-content: center;
}
.up {
  height: 17px;
}
.thumb {
  height: 63%;
  border: solid #aaa;
  border-width: 1px 0;
  background: #dcdcdc;
}
.down {
  height: 5px;
  margin-top: auto;
  border-top: 1px solid #aaa;
}

/* taskbar */
.taskbar {
  display: flex;
  gap: 1px;
  height: 40px;
  background: linear-gradient(90deg, #383838, #484848 60px, #484848 calc(100% - 180px), #303030);
}
.taskbar button {
  position: relative;
  width: 48px;
}
.taskbar button:first-child {
  width: 46px;
}
.taskbar .current {
  background: #6e6e6e;
}
.run::after {
  content: "";
  position: absolute;
  left: 4px;
  right: 4px;
  bottom: 0;
  height: 2px;
  background: #76b9ed;
}
.run.current::after {
  left: 0;
  right: 0;
}
.run.multi::after {
  background: linear-gradient(90deg, #76b9ed 80%, #5686ad 80%);
}
```
